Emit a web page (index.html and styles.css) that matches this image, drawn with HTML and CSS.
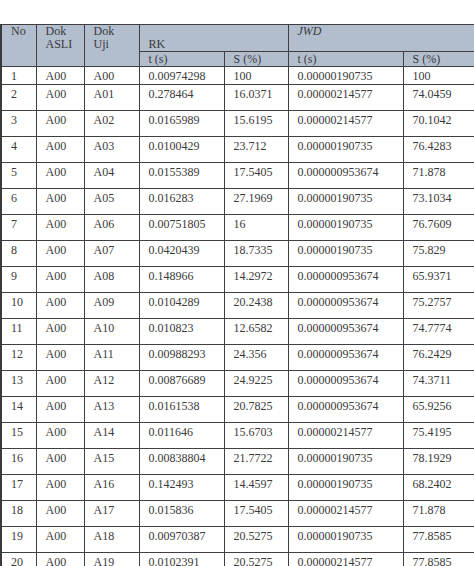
FILE: index.html
```html
<!DOCTYPE html>
<html>
<head>
<meta charset="utf-8">
<link rel="stylesheet" href="styles.css">
</head>
<body>
<table class="results">
  <colgroup>
    <col class="c-no"><col class="c-asli"><col class="c-uji"><col class="c-rkt"><col class="c-rks"><col class="c-jt"><col class="c-js">
  </colgroup>
  <thead>
    <tr class="h1">
      <th rowspan="2">No</th>
      <th rowspan="2">Dok<br>ASLI</th>
      <th rowspan="2">Dok<br>Uji</th>
      <th colspan="2" class="rk">RK</th>
      <th colspan="2" class="jwd"><em>JWD</em></th>
    </tr>
    <tr class="h2">
      <th>t (s)</th><th>S (%)</th><th>t (s)</th><th>S (%)</th>
    </tr>
  </thead>
  <tbody>
    <tr class="first"><td>1</td><td>A00</td><td>A00</td><td>0.00974298</td><td>100</td><td>0.00000190735</td><td>100</td></tr>
    <tr><td>2</td><td>A00</td><td>A01</td><td>0.278464</td><td>16.0371</td><td>0.00000214577</td><td>74.0459</td></tr>
    <tr><td>3</td><td>A00</td><td>A02</td><td>0.0165989</td><td>15.6195</td><td>0.00000214577</td><td>70.1042</td></tr>
    <tr><td>4</td><td>A00</td><td>A03</td><td>0.0100429</td><td>23.712</td><td>0.00000190735</td><td>76.4283</td></tr>
    <tr><td>5</td><td>A00</td><td>A04</td><td>0.0155389</td><td>17.5405</td><td>0.000000953674</td><td>71.878</td></tr>
    <tr><td>6</td><td>A00</td><td>A05</td><td>0.016283</td><td>27.1969</td><td>0.00000190735</td><td>73.1034</td></tr>
    <tr><td>7</td><td>A00</td><td>A06</td><td>0.00751805</td><td>16</td><td>0.00000190735</td><td>76.7609</td></tr>
    <tr><td>8</td><td>A00</td><td>A07</td><td>0.0420439</td><td>18.7335</td><td>0.00000190735</td><td>75.829</td></tr>
    <tr><td>9</td><td>A00</td><td>A08</td><td>0.148966</td><td>14.2972</td><td>0.000000953674</td><td>65.9371</td></tr>
    <tr><td>10</td><td>A00</td><td>A09</td><td>0.0104289</td><td>20.2438</td><td>0.000000953674</td><td>75.2757</td></tr>
    <tr><td>11</td><td>A00</td><td>A10</td><td>0.010823</td><td>12.6582</td><td>0.000000953674</td><td>74.7774</td></tr>
    <tr><td>12</td><td>A00</td><td>A11</td><td>0.00988293</td><td>24.356</td><td>0.000000953674</td><td>76.2429</td></tr>
    <tr><td>13</td><td>A00</td><td>A12</td><td>0.00876689</td><td>24.9225</td><td>0.000000953674</td><td>74.3711</td></tr>
    <tr><td>14</td><td>A00</td><td>A13</td><td>0.0161538</td><td>20.7825</td><td>0.000000953674</td><td>65.9256</td></tr>
    <tr><td>15</td><td>A00</td><td>A14</td><td>0.011646</td><td>15.6703</td><td>0.00000214577</td><td>75.4195</td></tr>
    <tr><td>16</td><td>A00</td><td>A15</td><td>0.00838804</td><td>21.7722</td><td>0.00000190735</td><td>78.1929</td></tr>
    <tr><td>17</td><td>A00</td><td>A16</td><td>0.142493</td><td>14.4597</td><td>0.00000190735</td><td>68.2402</td></tr>
    <tr><td>18</td><td>A00</td><td>A17</td><td>0.015836</td><td>17.5405</td><td>0.00000214577</td><td>71.878</td></tr>
    <tr><td>19</td><td>A00</td><td>A18</td><td>0.00970387</td><td>20.5275</td><td>0.00000190735</td><td>77.8585</td></tr>
    <tr><td>20</td><td>A00</td><td>A19</td><td>0.0102391</td><td>20.5275</td><td>0.00000214577</td><td>77.8585</td></tr>
  </tbody>
</table>
</body>
</html>
```

FILE: styles.css
```css
html, body {
  margin: 0;
  padding: 0;
  background: #ffffff;
  overflow: hidden;
}
body {
  padding-top: 24px;
}
.results {
  width: 474px;
  table-layout: fixed;
  border-collapse: collapse;
  font-family: "Liberation Serif", "Times New Roman", serif;
  font-size: 12px;
  line-height: 13.2px;
  color: #3a3a3a;
  border-left: 2px solid #3a3a3a;
  border-right: 2px solid #3a3a3a;
  border-top: 1px solid #3a3a3a;
}
.c-no { width: 35px; }
.c-asli { width: 48px; }
.c-uji { width: 55px; }
.c-rkt { width: 85px; }
.c-rks { width: 64px; }
.c-jt { width: 115px; }
.c-js { width: 72px; }
.results th,
.results td {
  border: 1px solid #3f3f3f;
  text-align: left;
  font-weight: normal;
  vertical-align: top;
  padding: 0 0 0 9px;
  white-space: nowrap;
  overflow: hidden;
}
.results thead th {
  background: #b2bece;
}
.results .h1 th {
  height: 26px;
  padding-top: 0;
}
.results .h1 th.rk {
  vertical-align: bottom;
  padding-bottom: 0;
}
.results .h2 th {
  height: 13px;
  padding-top: 1px;
}
.results td {
  height: 26px;
  padding-top: 3px;
  box-sizing: border-box;
}
.results tr.first td {
  height: 18px;
}
```
